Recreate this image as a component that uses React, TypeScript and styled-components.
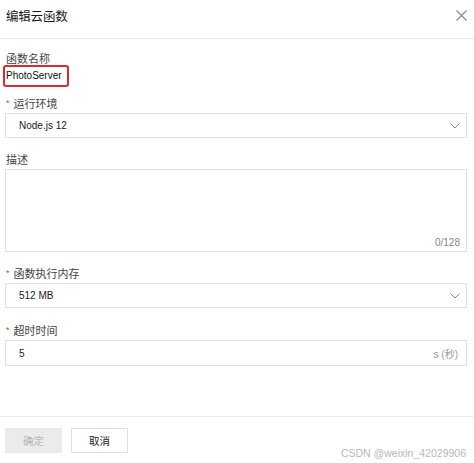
import React from "react";
import styled, { createGlobalStyle } from "styled-components";

const Global = createGlobalStyle`
  html, body { margin: 0; padding: 0; background: #fff; }
  body { font-family: "Liberation Sans", "Noto Sans CJK SC", sans-serif; }
  * { box-sizing: border-box; }
`;

const Dialog = styled.div`
  position: relative;
  width: 474px;
  height: 463px;
  display: flex;
  flex-direction: column;
  background: #fff;
  color: #222;
`;

const Header = styled.div`
  height: 39px;
  padding: 0 7px 7px 6px;
  display: flex;
  align-items: center;
  justify-content: space-between;
  border-bottom: 1px solid #ebebeb;
`;

const Title = styled.div`
  font-size: 12.5px;
  color: #1a1a1a;
  letter-spacing: -0.2px;
`;

const Body = styled.div`
  flex: 1;
  padding: 13px 7px 0 5px;
  display: flex;
  flex-direction: column;
`;

const Field = styled.div<{ $top: number }>`
  display: flex;
  flex-direction: column;
  margin-top: ${(p) => p.$top}px;
`;

const Label = styled.div`
  font-size: 11px;
  line-height: 15px;
  height: 15px;
  color: #444;
  padding-left: 1px;
  margin-bottom: 1px;
`;

const Star = styled.span`
  color: #e0413c;
  font-size: 9px;
  margin-right: 4px;
  position: relative;
  top: -2px;
`;

const Highlight = styled.span`
  align-self: flex-start;
  margin-top: -3px;
  margin-left: -2px;
  border: 2px solid #d92b2f;
  border-radius: 3px;
  padding: 0 5px 0 1px;
  font-size: 10px;
  line-height: 18px;
  color: #111;
`;

const Box = styled.div<{ $h: number }>`
  position: relative;
  height: ${(p) => p.$h}px;
  border: 1px solid #e2e2e2;
  display: flex;
  align-items: ${(p) => (p.$h > 40 ? "flex-end" : "center")};
  justify-content: space-between;
  padding: 0 6px 0 13px;
  font-size: 10px;
  color: #1a1a1a;
`;

const Counter = styled.span`
  margin-left: auto;
  margin-bottom: 3px;
  font-size: 10px;
  color: #888;
`;

const Suffix = styled.span`
  font-size: 10px;
  color: #999;
  margin-right: 2px;
`;

const Footer = styled.div`
  height: 47px;
  border-top: 1px solid #ebebeb;
  padding: 11px 5px 0;
  display: flex;
  gap: 9px;
  align-items: flex-start;
`;

const Button = styled.button<{ $disabled?: boolean }>`
  width: 57px;
  height: 25px;
  font-family: inherit;
  font-size: 10.5px;
  border: 1px solid ${(p) => (p.$disabled ? "#ebebeb" : "#e0e0e0")};
  background: ${(p) => (p.$disabled ? "#ebebeb" : "#fff")};
  color: ${(p) => (p.$disabled ? "#b5b5b5" : "#222")};
  padding: 0;
`;

const Watermark = styled.div`
  position: absolute;
  right: 8px;
  bottom: 4px;
  font-size: 10.5px;
  color: #b8b8b8;
`;

const Chevron = () => (
  <svg width="10" height="6" viewBox="0 0 10 6">
    <polyline points="0.5,0.5 5,5 9.5,0.5" fill="none" stroke="#888" strokeWidth="1" />
  </svg>
);

const Close = () => (
  <svg width="11" height="11" viewBox="0 0 11 11">
    <path d="M0.5 0.5 L10.5 10.5 M10.5 0.5 L0.5 10.5" stroke="#8a8a8a" strokeWidth="1.2" />
  </svg>
);

export default function App() {
  return (
    <>
      <Global />
      <Dialog>
        <Header>
          <Title>编辑云函数</Title>
          <Close />
        </Header>
        <Body>
          <Field $top={0}>
            <Label>函数名称</Label>
            <Highlight>PhotoServer</Highlight>
          </Field>
          <Field $top={10}>
            <Label>
              <Star>*</Star>运行环境
            </Label>
            <Box $h={25}>
              <span>Node.js 12</span>
              <Chevron />
            </Box>
          </Field>
          <Field $top={15}>
            <Label>描述</Label>
            <Box $h={83}>
              <Counter>0/128</Counter>
            </Box>
          </Field>
          <Field $top={15}>
            <Label>
              <Star>*</Star>函数执行内存
            </Label>
            <Box $h={25}>
              <span>512 MB</span>
              <Chevron />
            </Box>
          </Field>
          <Field $top={16}>
            <Label>
              <Star>*</Star>超时时间
            </Label>
            <Box $h={26}>
              <span>5</span>
              <Suffix>s (秒)</Suffix>
            </Box>
          </Field>
        </Body>
        <Footer>
          <Button $disabled>确定</Button>
          <Button>取消</Button>
        </Footer>
        <Watermark>CSDN @weixin_42029906</Watermark>
      </Dialog>
    </>
  );
}
